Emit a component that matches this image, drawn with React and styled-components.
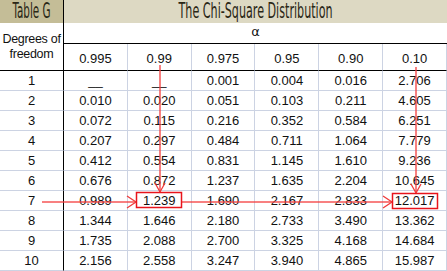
import styled, { createGlobalStyle } from 'styled-components'

const Global = createGlobalStyle`
  html, body {
    margin: 0;
    padding: 0;
    background: #ffffff;
  }
  body {
    font-family: "Liberation Sans", Arial, sans-serif;
  }
`

const Wrap = styled.div`
  position: relative;
  width: 447px;
  height: 271px;
  overflow: hidden;
`

const Grid = styled.div`
  display: grid;
  grid-template-columns: 64px repeat(6, 1fr);
  grid-template-rows: 23px 21px 27px repeat(10, 20px);
  width: 447px;
  font-size: 13px;
  color: #111;
`

const Banner = styled.div`
  display: flex;
  align-items: center;
  justify-content: center;
  background: ${(p) => (p.$dark ? '#c4bd97' : '#ddd9c3')};
  border-right: ${(p) => (p.$dark ? '1px solid #000' : 'none')};
  grid-column: ${(p) => p.$span || 'auto'};
  overflow: hidden;
`

const BannerText = styled.span`
  display: inline-block;
  font-family: "Liberation Sans Narrow", "DejaVu Sans Condensed", "Liberation Sans", sans-serif;
  font-size: 21px;
  line-height: 23px;
  color: #2a2716;
  transform: scaleX(${(p) => p.$sx || 0.6});
  white-space: nowrap;
`

const DfHead = styled.div`
  grid-row: span 2;
  display: flex;
  flex-direction: column;
  align-items: center;
  justify-content: center;
  text-align: center;
  font-size: 12.5px;
  letter-spacing: -0.3px;
  line-height: 15px;
  padding-top: 1px;
  white-space: nowrap;
  border-right: 1px solid #000;
  border-bottom: 1px solid #000;
  box-sizing: border-box;
`

const Alpha = styled.div`
  grid-column: span 6;
  display: flex;
  justify-content: center;
  align-items: center;
  padding-bottom: 3px;
  border-bottom: 1px solid #000;
  box-sizing: border-box;
  font-family: "DejaVu Sans", sans-serif;
  font-size: 13px;
`

const Cell = styled.div`
  display: flex;
  align-items: center;
  justify-content: center;
  box-sizing: border-box;
  border-right: 1px solid ${(p) => (p.$first ? '#000' : '#ccd3e3')};
  border-bottom: 1px solid ${(p) => (p.$head ? '#000' : '#ccd3e3')};
  padding-top: ${(p) => (p.$head ? '2px' : '0')};
  white-space: nowrap;
`

const Overlay = styled.svg`
  position: absolute;
  left: 0;
  top: 0;
  pointer-events: none;
`

const alphas = ['0.995', '0.99', '0.975', '0.95', '0.90', '0.10']

const rows = [
  ['1', '__', '__', '0.001', '0.004', '0.016', '2.706'],
  ['2', '0.010', '0.020', '0.051', '0.103', '0.211', '4.605'],
  ['3', '0.072', '0.115', '0.216', '0.352', '0.584', '6.251'],
  ['4', '0.207', '0.297', '0.484', '0.711', '1.064', '7.779'],
  ['5', '0.412', '0.554', '0.831', '1.145', '1.610', '9.236'],
  ['6', '0.676', '0.872', '1.237', '1.635', '2.204', '10.645'],
  ['7', '0.989', '1.239', '1.690', '2.167', '2.833', '12.017'],
  ['8', '1.344', '1.646', '2.180', '2.733', '3.490', '13.362'],
  ['9', '1.735', '2.088', '2.700', '3.325', '4.168', '14.684'],
  ['10', '2.156', '2.558', '3.247', '3.940', '4.865', '15.987'],
]

function Arrows() {
  const line = 'rgba(245, 60, 60, 0.65)'
  const head = '#f03a3a'
  return (
    <Overlay width="447" height="271" viewBox="0 0 447 271">
      <g stroke={line} strokeWidth="2" fill="none">
        <line x1="160" y1="65" x2="160" y2="192" />
        <line x1="416" y1="67" x2="416" y2="193" />
        <line x1="42" y1="202" x2="136" y2="202" />
        <line x1="182" y1="202" x2="392" y2="202" />
      </g>
      <g stroke={head} strokeWidth="1.3" fill="none">
        <polyline points="155,183 160,192 165,183" />
        <polyline points="411,184 416,193 421,184" />
        <polyline points="127,196 136,202 127,208" />
        <polyline points="383,196 392,202 383,208" />
      </g>
      <g stroke="#e8141c" strokeWidth="1.5" fill="none">
        <rect x="136.5" y="192.5" width="45" height="15" />
        <rect x="392.5" y="193.5" width="45" height="15" />
      </g>
    </Overlay>
  )
}

export default function App() {
  return (
    <Wrap>
      <Global />
      <Grid>
        <Banner $dark>
          <BannerText $sx={0.55}>Table G</BannerText>
        </Banner>
        <Banner $span="span 6">
          <BannerText $sx={0.59}>The Chi-Square Distribution</BannerText>
        </Banner>

        <DfHead>
          <span>Degrees of</span>
          <span>freedom</span>
        </DfHead>
        <Alpha>α</Alpha>
        {alphas.map((a) => (
          <Cell key={a} $head>
            {a}
          </Cell>
        ))}

        {rows.map((r) =>
          r.map((v, i) => (
            <Cell key={r[0] + '-' + i} $first={i === 0}>
              {v}
            </Cell>
          ))
        )}
      </Grid>
      <Arrows />
    </Wrap>
  )
}
